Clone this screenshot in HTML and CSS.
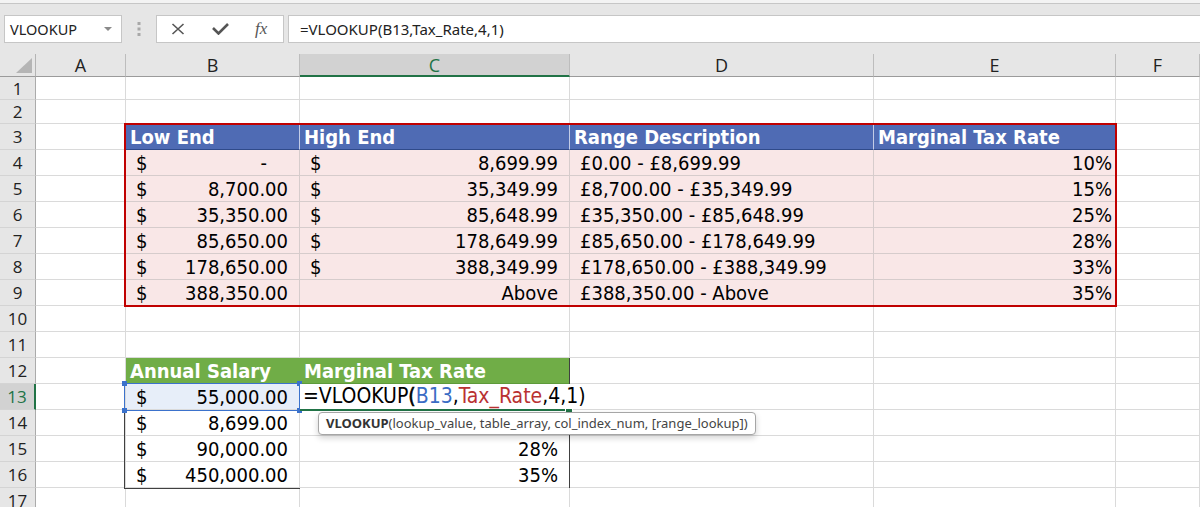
FILE: index.html
```html
<!DOCTYPE html>
<html lang="en">
<head>
  <meta charset="UTF-8">
  <title>Tax Rate - VLOOKUP</title>
  <link rel="stylesheet" href="styles.css">
</head>
<body>

  <div class="topline"></div>

  <!-- Name box + formula bar -->
  <div class="toolbar">
    <div class="namebox">
      <span>VLOOKUP</span>
      <svg width="8" height="5" viewBox="0 0 8 5"><path d="M0 0h8L4 4z" fill="#8a8a8a"/></svg>
    </div>
    <div class="grip">
      <svg width="4" height="14" viewBox="0 0 4 14"><rect x="0.5" y="0" width="3" height="3" fill="#a8a8a8"/><rect x="0.5" y="5.5" width="3" height="3" fill="#a8a8a8"/><rect x="0.5" y="11" width="3" height="3" fill="#a8a8a8"/></svg>
    </div>
    <div class="fxbox">
      <svg class="ico-x" width="14" height="12" viewBox="0 0 14 12"><path d="M1.5 1L12.5 11M12.5 1L1.5 11" stroke="#555" stroke-width="1.6" fill="none"/></svg>
      <svg class="ico-ok" width="17" height="12" viewBox="0 0 17 12"><path d="M1 5L6.5 10.5L16 1" stroke="#555" stroke-width="2.6" fill="none"/></svg>
      <i class="fx">fx</i>
    </div>
    <div class="formula">=VLOOKUP(B13,Tax_Rate,4,1)</div>
  </div>

  <!-- Worksheet -->
  <div class="sheet">
    <!-- column headers -->
    <div class="corner"><span class="tri"></span></div>
    <div class="ch">A</div><div class="ch">B</div><div class="ch sel">C</div><div class="ch">D</div><div class="ch">E</div><div class="ch">F</div>

    <!-- row 1 -->
    <div class="rh">1</div><div class="cell"></div><div class="cell"></div><div class="cell"></div><div class="cell"></div><div class="cell"></div><div class="cell"></div>
    <!-- row 2 -->
    <div class="rh">2</div><div class="cell"></div><div class="cell"></div><div class="cell"></div><div class="cell"></div><div class="cell"></div><div class="cell"></div>

    <!-- row 3: tax table header -->
    <div class="rh">3</div><div class="cell"></div>
    <div class="cell bh">Low End</div>
    <div class="cell bh">High End</div>
    <div class="cell bh">Range Description</div>
    <div class="cell bh">Marginal Tax Rate</div>
    <div class="cell"></div>

    <!-- row 4 -->
    <div class="rh">4</div><div class="cell"></div>
    <div class="cell pk acct"><span>$</span><span class="dash">-</span></div>
    <div class="cell pk acct"><span>$</span><span>8,699.99</span></div>
    <div class="cell pk txt">£0.00 - £8,699.99</div>
    <div class="cell pk pct">10%</div>
    <div class="cell"></div>

    <!-- row 5 -->
    <div class="rh">5</div><div class="cell"></div>
    <div class="cell pk acct"><span>$</span><span>8,700.00</span></div>
    <div class="cell pk acct"><span>$</span><span>35,349.99</span></div>
    <div class="cell pk txt">£8,700.00 - £35,349.99</div>
    <div class="cell pk pct">15%</div>
    <div class="cell"></div>

    <!-- row 6 -->
    <div class="rh">6</div><div class="cell"></div>
    <div class="cell pk acct"><span>$</span><span>35,350.00</span></div>
    <div class="cell pk acct"><span>$</span><span>85,648.99</span></div>
    <div class="cell pk txt">£35,350.00 - £85,648.99</div>
    <div class="cell pk pct">25%</div>
    <div class="cell"></div>

    <!-- row 7 -->
    <div class="rh">7</div><div class="cell"></div>
    <div class="cell pk acct"><span>$</span><span>85,650.00</span></div>
    <div class="cell pk acct"><span>$</span><span>178,649.99</span></div>
    <div class="cell pk txt">£85,650.00 - £178,649.99</div>
    <div class="cell pk pct">28%</div>
    <div class="cell"></div>

    <!-- row 8 -->
    <div class="rh">8</div><div class="cell"></div>
    <div class="cell pk acct"><span>$</span><span>178,650.00</span></div>
    <div class="cell pk acct"><span>$</span><span>388,349.99</span></div>
    <div class="cell pk txt">£178,650.00 - £388,349.99</div>
    <div class="cell pk pct">33%</div>
    <div class="cell"></div>

    <!-- row 9 -->
    <div class="rh">9</div><div class="cell"></div>
    <div class="cell pk acct"><span>$</span><span>388,350.00</span></div>
    <div class="cell pk num">Above</div>
    <div class="cell pk txt">£388,350.00 - Above</div>
    <div class="cell pk pct">35%</div>
    <div class="cell"></div>

    <!-- row 10 -->
    <div class="rh">10</div><div class="cell"></div><div class="cell"></div><div class="cell"></div><div class="cell"></div><div class="cell"></div><div class="cell"></div>
    <!-- row 11 -->
    <div class="rh">11</div><div class="cell"></div><div class="cell"></div><div class="cell"></div><div class="cell"></div><div class="cell"></div><div class="cell"></div>

    <!-- row 12: salary table header -->
    <div class="rh">12</div><div class="cell"></div>
    <div class="cell gh">Annual Salary</div>
    <div class="cell gh">Marginal Tax Rate</div>
    <div class="cell"></div><div class="cell"></div><div class="cell"></div>

    <!-- row 13 -->
    <div class="rh sel">13</div><div class="cell"></div>
    <div class="cell acct picked"><span>$</span><span>55,000.00</span></div>
    <div class="cell"></div>
    <div class="cell"></div><div class="cell"></div><div class="cell"></div>

    <!-- row 14 (result hidden under the tooltip) -->
    <div class="rh">14</div><div class="cell"></div>
    <div class="cell acct"><span>$</span><span>8,699.00</span></div>
    <div class="cell num"></div>
    <div class="cell"></div><div class="cell"></div><div class="cell"></div>

    <!-- row 15 -->
    <div class="rh">15</div><div class="cell"></div>
    <div class="cell acct"><span>$</span><span>90,000.00</span></div>
    <div class="cell num">28%</div>
    <div class="cell"></div><div class="cell"></div><div class="cell"></div>

    <!-- row 16 -->
    <div class="rh">16</div><div class="cell"></div>
    <div class="cell acct"><span>$</span><span>450,000.00</span></div>
    <div class="cell num">35%</div>
    <div class="cell"></div><div class="cell"></div><div class="cell"></div>

    <!-- row 17 -->
    <div class="rh">17</div><div class="cell"></div><div class="cell"></div><div class="cell"></div><div class="cell"></div><div class="cell"></div><div class="cell"></div>

    <!-- overlays: borders, selection, editor, tooltip -->
    <div class="frame-red"></div>
    <div class="frame-b"></div>
    <div class="frame-c"></div>
    <div class="ref-box">
      <span class="hd tl"></span><span class="hd tr"></span><span class="hd bl"></span><span class="hd br"></span>
    </div>
    <div class="active">
      <span class="fill"></span>
    </div>
    <div class="editor">=VLOOKUP<b>(</b><span class="ref1">B13</span>,<span class="ref2">Tax_Rate</span>,4,1)</div>
    <div class="tip"><b>VLOOKUP</b>(lookup_value, table_array, col_index_num, [range_lookup])</div>
  </div>

</body>
</html>
```

FILE: styles.css
```css
body {
  margin: 0;
  width: 1200px;
  height: 507px;
  overflow: hidden;
  background-color: #fff;
  font-family: "Noto Sans", "Open Sans", sans-serif;
  color: #000;
}

/* ---------- formula bar ---------- */

.topline {
  height: 3px;
  background-color: #f3f3f3;
  border-bottom: 1px solid #c6c6c6;
}

.toolbar {
  display: flex;
  align-items: flex-start;
  height: 39px;
  padding: 11px 0 0 4px;
  background-color: #e6e6e6;
}

.namebox, .fxbox, .formula {
  box-sizing: border-box;
  height: 28px;
  background-color: #fff;
  border: 1px solid #c6c6c6;
}

.namebox {
  width: 118px;
  display: flex;
  align-items: center;
  justify-content: space-between;
  padding: 0 9px 0 5px;
  font-size: 14.5px;
  color: #222;
}

.grip {
  width: 34px;
  height: 28px;
  display: flex;
  align-items: center;
  justify-content: center;
}

.fxbox {
  width: 128px;
  display: flex;
  align-items: center;
  padding-left: 14px;
}

.ico-x {
  margin-right: 27px;
}

.ico-ok {
  margin-right: 26px;
}

.fx {
  font-family: "Liberation Serif", serif;
  font-size: 17px;
  color: #555;
}

.formula {
  flex: 1;
  margin-left: 4px;
  border-right: none;
  padding-left: 11px;
  font-size: 15px;
  line-height: 26px;
  color: #222;
}

/* ---------- grid ---------- */

.sheet {
  position: relative;
  display: grid;
  grid-template-columns: 36px 90px 174px 270px 304px 242px 1fr;
  grid-template-rows: 23px 23px 24px repeat(15, 26px);
  font-family: "DejaVu Sans Condensed", "DejaVu Sans", sans-serif;
  font-stretch: condensed;
  font-size: 20px;
}

.corner, .ch, .rh, .cell {
  box-sizing: border-box;
  white-space: nowrap;
}

.corner {
  position: relative;
  background-color: #e6e6e6;
  border-right: 1px solid #b4b4b4;
  border-bottom: 1px solid #9b9b9b;
}

.tri {
  position: absolute;
  right: 3px;
  bottom: 3px;
  width: 0;
  height: 0;
  border-left: 16px solid transparent;
  border-bottom: 15px solid #b5b5b5;
}

.ch, .rh {
  display: flex;
  align-items: center;
  justify-content: center;
  background-color: #e6e6e6;
  font-family: "Open Sans", sans-serif;
  font-stretch: normal;
  color: #222;
}

.ch {
  font-size: 18px;
  border-right: 1px solid #bdbdbd;
  border-bottom: 1px solid #9b9b9b;
}

.rh {
  font-size: 17px;
  border-right: 1px solid #ababab;
  border-bottom: 1px solid #d4d4d4;
}

.ch.sel, .rh.sel {
  background-color: #d2d2d2;
  color: #217346;
}

.ch.sel {
  border-bottom: 2px solid #217346;
}

.rh.sel {
  border-right: 2px solid #217346;
}

.cell {
  display: flex;
  align-items: flex-end;
  padding: 0 3px 1px 4px;
  line-height: 22px;
  border-right: 1px solid #dadada;
  border-bottom: 1px solid #dadada;
}

.acct {
  justify-content: space-between;
  padding: 0 11px 1px 10px;
}

.dash {
  margin-right: 21px;
}

.num {
  justify-content: flex-end;
  padding-right: 11px;
}

.txt {
  padding-left: 10px;
}

.pct {
  justify-content: flex-end;
  padding-right: 3px;
}

/* tax table */
.bh {
  background-color: #4f6bb4;
  color: #fff;
  font-weight: bold;
  border-right-color: #c3cce6;
  border-bottom-color: #2f4a8a;
}

.pk {
  background-color: #f9e7e7;
  border-right-color: #d6cccc;
  border-bottom-color: #d6cccc;
}

/* salary table */
.gh {
  background-color: #70ad47;
  color: #fff;
  font-weight: bold;
  border-right-color: #70ad47;
  border-bottom-color: #5d9a3a;
}

.picked {
  background-color: #e7eef9;
}

/* ---------- overlays ---------- */

.frame-red, .frame-b, .frame-c, .ref-box, .active, .editor, .tip {
  position: absolute;
  box-sizing: border-box;
}

.frame-red {
  grid-area: 4 / 3 / 11 / 7;
  top: -1px;
  left: -2px;
  right: -1px;
  bottom: -1px;
  border: 2px solid #c00000;
  z-index: 1;
}

.frame-b {
  grid-area: 14 / 3 / 18 / 4;
  top: 0;
  left: -2px;
  right: 0;
  bottom: -1px;
  border-left: 1px solid #404040;
  border-bottom: 1px solid #404040;
  z-index: 1;
}

.frame-c {
  grid-area: 13 / 4 / 18 / 5;
  top: 0;
  left: 0;
  right: 0;
  bottom: 0;
  border-right: 1px solid #404040;
  z-index: 1;
}

.ref-box {
  grid-area: 14 / 3 / 15 / 4;
  top: -1px;
  left: -2px;
  right: 0;
  bottom: -1px;
  border: 1px solid #3b72cc;
  z-index: 2;
}

.hd {
  position: absolute;
  width: 5px;
  height: 5px;
  background-color: #3b72cc;
}

.tl { left: -3px; top: -3px; }
.tr { right: -3px; top: -3px; }
.bl { left: -3px; bottom: -3px; }
.br { right: -3px; bottom: -3px; }

.active {
  grid-area: 14 / 4 / 15 / 5;
  top: 0;
  left: 0;
  right: 0;
  bottom: -1px;
  border-bottom: 2px solid #217346;
  z-index: 2;
}

.fill {
  position: absolute;
  right: -3px;
  bottom: -4px;
  width: 6px;
  height: 6px;
  background-color: #217346;
  border: 1px solid #fff;
}

.editor {
  grid-area: 14 / 4 / 15 / 5;
  top: 0;
  left: 0;
  bottom: 1px;
  padding: 0 6px 0 3px;
  background-color: #fff;
  font-size: 21px;
  line-height: 25px;
  white-space: nowrap;
  z-index: 3;
}

.editor b {
  font-weight: normal;
  -webkit-text-stroke: 0.6px #000;
}

.ref1 {
  color: #3a6cc4;
}

.ref2 {
  color: #b93232;
}

.tip {
  grid-area: 15 / 4 / 16 / 5;
  top: 2px;
  left: 18px;
  height: 23px;
  padding: 0 7px;
  background-color: #fff;
  border: 1px solid #a6a6a6;
  border-radius: 4px;
  box-shadow: 0 3px 6px rgba(0, 0, 0, 0.18);
  font-family: "Noto Sans", "Open Sans", sans-serif;
  font-stretch: normal;
  font-size: 13px;
  line-height: 21px;
  color: #444;
  white-space: nowrap;
  z-index: 4;
}

.tip b {
  color: #333;
}
```
